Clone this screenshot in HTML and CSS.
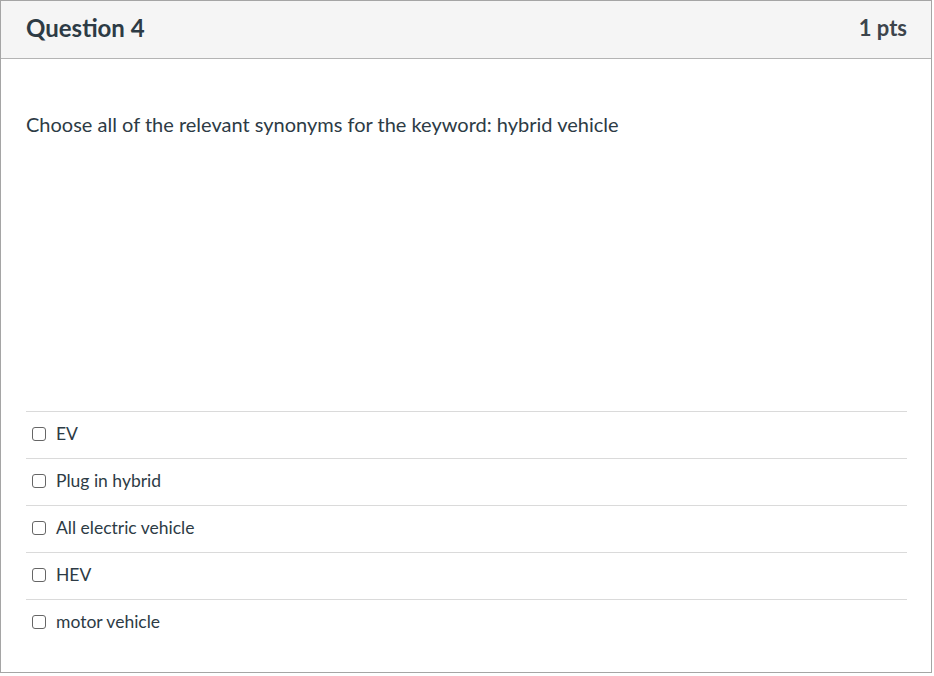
FILE: index.html
```html
<!DOCTYPE html>
<html>
<head>
<meta charset="utf-8">
<link rel="stylesheet" href="styles.css">
</head>
<body>
<div class="question">
  <div class="header">
    <span class="title">Question 4</span>
    <span class="pts">1 pts</span>
  </div>
  <div class="body">
    <p class="text">Choose all of the relevant synonyms for the keyword: hybrid vehicle</p>
    <div class="answers">
      <label class="answer"><span class="box"></span><span>EV</span></label>
      <label class="answer"><span class="box"></span><span>Plug in hybrid</span></label>
      <label class="answer"><span class="box"></span><span>All electric vehicle</span></label>
      <label class="answer"><span class="box"></span><span>HEV</span></label>
      <label class="answer"><span class="box"></span><span>motor vehicle</span></label>
    </div>
  </div>
</div>
</body>
</html>
```
FILE: styles.css
```css
html, body {
  margin: 0;
  padding: 0;
  background: #fff;
}
body {
  font-family: Lato, "Noto Sans", sans-serif;
  color: #2d3b45;
}
.question {
  width: 930px;
  height: 671px;
  border: 1px solid #a5a5a5;
  display: flex;
  flex-direction: column;
}
.header {
  height: 57px;
  background: #f5f5f5;
  border-bottom: 1px solid #b4b4b4;
  display: flex;
  align-items: center;
  justify-content: space-between;
  padding: 0 24px 0 25px;
}
.title {
  font-weight: 700;
  font-size: 24px;
  line-height: 28px;
  margin-top: -4px;
}
.pts {
  font-weight: 700;
  font-size: 22px;
  line-height: 28px;
  margin-top: -4px;
  color: #3d454c;
}
.body {
  padding: 0 24px 0 25px;
  flex: 1;
  display: flex;
  flex-direction: column;
}
.text {
  margin: 52px 0 0;
  font-size: 20px;
  line-height: 26px;
}
.answers {
  margin-top: auto;
  margin-bottom: 26px;
}
.answer {
  display: flex;
  align-items: center;
  height: 43px;
  padding-bottom: 3px;
  border-top: 1px solid #dadada;
  font-size: 17.5px;
}
.box {
  width: 12px;
  height: 12px;
  border: 1.5px solid #666;
  border-radius: 3px;
  margin: 0 10px 0 6px;
  flex: none;
}
```
